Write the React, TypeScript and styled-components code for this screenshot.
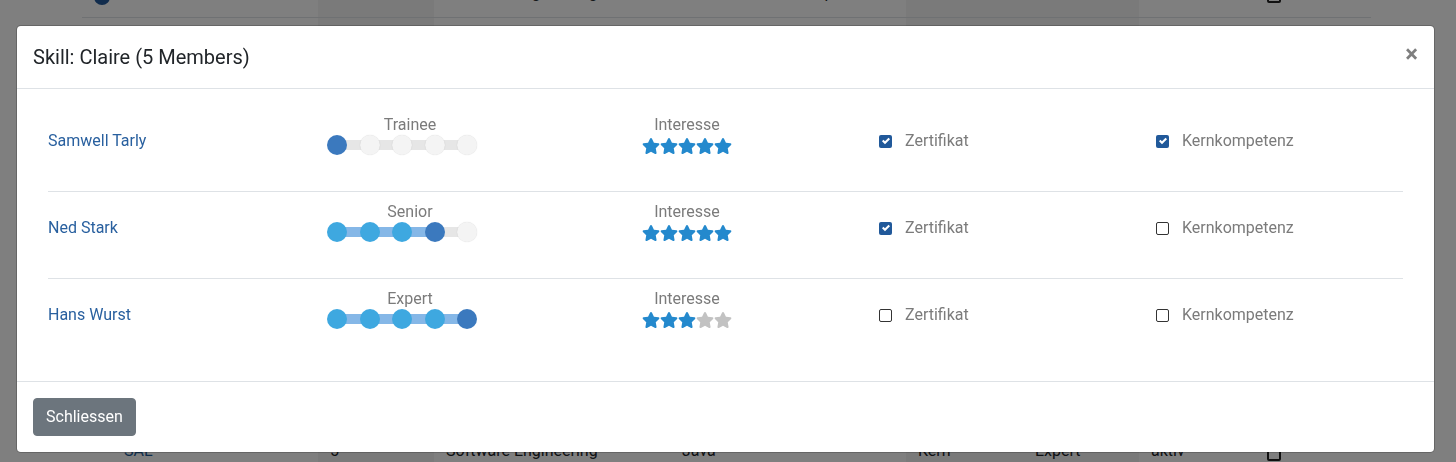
import React from "react";
import styled, { createGlobalStyle } from "styled-components";

const GlobalStyle = createGlobalStyle`
  * { box-sizing: border-box; }
  html, body { margin: 0; padding: 0; height: 100%; overflow: hidden; background: #fff; }
  body {
    font-family: Roboto, "Noto Sans", "Liberation Sans", Arial, sans-serif;
    font-size: 16px;
    line-height: 1.5;
    color: #212529;
  }
`;

/* ---------- background page (table behind the modal) ---------- */

const Page = styled.div`
  padding-left: 82px;
`;

const Table = styled.div`
  width: 1289px;
`;

const TRow = styled.div<{ $partial?: boolean }>`
  display: grid;
  grid-template-columns: 236px 116px 236px 236px 117px 116px 116px 116px;
  grid-template-rows: minmax(0, 1fr);
  height: ${(p) => (p.$partial ? "18px" : "51px")};
  border-bottom: 1px solid #dee2e6;
  & > *:nth-child(2),
  & > *:nth-child(5),
  & > *:nth-child(6) {
    background: #f4f4f4;
  }
`;

const LastRow = styled(TRow)`
  height: 60px;
  border-bottom: none;
`;

const TCell = styled.div<{ $partial?: boolean }>`
  min-height: 0;
  display: flex;
  flex-direction: column;
  justify-content: ${(p) => (p.$partial ? "flex-end" : "flex-start")};
  padding: ${(p) => (p.$partial ? "0 12px 12px" : "13px 12px 0")};
  white-space: nowrap;
`;

const CellLine = styled.div`
  flex: 0 0 24px;
  display: flex;
  align-items: center;
  gap: 14px;
  height: 24px;
  line-height: 24px;
`;

const Avatar = styled.span<{ $hidden?: boolean }>`
  flex: 0 0 16px;
  height: 16px;
  margin-top: 8px;
  border-radius: 50%;
  background: ${(p) => (p.$hidden ? "transparent" : "#23599a")};
`;

const TLink = styled.span`
  color: #1f5c99;
`;

const EditBox = styled.span`
  width: 14px;
  height: 14px;
  margin-top: 6px;
  border: 2px solid #222;
  border-radius: 2px;
`;

/* ---------- modal ---------- */

const Backdrop = styled.div`
  position: fixed;
  inset: 0;
  background: rgba(0, 0, 0, 0.5);
  padding: 25px 21px 0 16px;
`;

const Dialog = styled.div`
  width: 1419px;
  background: #fff;
  background-clip: padding-box;
  border: 1px solid rgba(0, 0, 0, 0.2);
  border-radius: 4.8px;
  display: flex;
  flex-direction: column;
`;

const Header = styled.div`
  display: flex;
  align-items: flex-start;
  padding: 16px;
  border-bottom: 1px solid #dee2e6;
`;

const Title = styled.h5`
  margin: 0;
  font-size: 20px;
  font-weight: 400;
  line-height: 30px;
  color: #212529;
`;

const Close = styled.button`
  margin: -16px -16px -16px auto;
  padding: 16px;
  background: transparent;
  border: 0;
  font-family: Roboto, "Liberation Sans", Arial, sans-serif;
  font-size: 24px;
  font-weight: 700;
  line-height: 1;
  color: #000;
  opacity: 0.5;
  text-shadow: 0 1px 0 #fff;
  cursor: pointer;
`;

const Body = styled.div`
  padding: 16px 31px;
`;

const MemberRow = styled.div<{ $last?: boolean }>`
  display: grid;
  grid-template-columns: repeat(5, 1fr);
  column-gap: 30px;
  align-items: start;
  height: ${(p) => (p.$last ? "86px" : "87px")};
  padding-top: 8px;
  border-bottom: ${(p) => (p.$last ? "none" : "1px solid #dee2e6")};
`;

const NameCell = styled.div`
  padding-top: 16px;
  line-height: 24px;
  color: #29609f;
`;

const Block = styled.div`
  width: 170px;
  display: flex;
  flex-direction: column;
`;

const BlockLabel = styled.div`
  text-align: center;
  line-height: 24px;
  color: #7b7b7b;
`;

const Slider = styled.div`
  display: flex;
  align-items: center;
  width: 150px;
  height: 20px;
  margin: -2px 0 0 2px;
`;

type KnobState = "done" | "active" | "empty";

const Knob = styled.span<{ $state: KnobState }>`
  position: relative;
  z-index: 1;
  flex: 0 0 20px;
  height: 20px;
  border-radius: 50%;
  background: ${(p) =>
    p.$state === "active" ? "#3b79be" : p.$state === "done" ? "#3ea8e0" : "#f4f4f4"};
  box-shadow: ${(p) => (p.$state === "empty" ? "0 0 1px 0 rgba(0,0,0,0.18)" : "none")};
`;

const Segment = styled.span<{ $filled: boolean }>`
  flex: 0 0 32.5px;
  height: 10px;
  margin: 0 -10px;
  background: ${(p) => (p.$filled ? "#85b7e7" : "#e6e6e6")};
`;

const Stars = styled.div`
  display: flex;
  justify-content: center;
  margin-top: 1px;
`;

const StarSvg = styled.svg<{ $on: boolean }>`
  display: block;
  width: 18px;
  height: 16px;
  fill: ${(p) => (p.$on ? "#2489cd" : "#c2c2c2")};
`;

const CheckCell = styled.label`
  padding-top: 16px;
  display: flex;
  align-items: center;
  height: 40px;
  line-height: 24px;
  color: #7b7b7b;
`;

const Box = styled.span<{ $checked: boolean }>`
  flex: 0 0 13px;
  width: 13px;
  height: 13px;
  margin-right: 13px;
  border-radius: 2px;
  display: flex;
  align-items: center;
  justify-content: center;
  background: ${(p) => (p.$checked ? "#21599a" : "#fff")};
  border: ${(p) => (p.$checked ? "none" : "1.5px solid #333")};
`;

const Footer = styled.div`
  display: flex;
  justify-content: flex-start;
  padding: 16px;
  border-top: 1px solid #dee2e6;
`;

const Button = styled.button`
  font-family: Roboto, "Liberation Sans", Arial, sans-serif;
  font-size: 16px;
  line-height: 24px;
  padding: 6px 12px;
  color: #fff;
  background: #6c757d;
  border: 1px solid #6c757d;
  border-radius: 4px;
  cursor: pointer;
`;

/* ---------- data ---------- */

const LEVELS = ["Trainee", "Junior", "Advanced", "Senior", "Expert"];

type Member = { name: string; level: number; interest: number; cert: boolean; core: boolean };

const members: Member[] = [
  { name: "Samwell Tarly", level: 1, interest: 5, cert: true, core: true },
  { name: "Ned Stark", level: 4, interest: 5, cert: true, core: false },
  { name: "Hans Wurst", level: 5, interest: 3, cert: false, core: false },
];

const STAR =
  "M259.3 17.8L194 150.2 47.9 171.5c-26.2 3.8-36.7 36.1-17.7 54.6l105.7 103-25 145.5c-4.5 26.3 23.2 46 46.4 33.7L288 439.6l130.7 68.7c23.2 12.2 50.9-7.4 46.4-33.7l-25-145.5 105.7-103c19-18.5 8.5-50.8-17.7-54.6L382 150.2 316.7 17.8c-11.7-23.6-45.6-23.9-57.4 0z";

const Star = ({ on }: { on: boolean }) => (
  <StarSvg viewBox="0 0 576 512" $on={on}>
    <path d={STAR} />
  </StarSvg>
);

const Check = ({ checked, label }: { checked: boolean; label: string }) => (
  <CheckCell>
    <Box $checked={checked}>
      {checked && (
        <svg width="8" height="8" viewBox="0 0 8 8">
          <path fill="#fff" d="M6.564.75l-3.59 3.612-1.538-1.55L0 4.26l2.974 2.99L8 2.193z" />
        </svg>
      )}
    </Box>
    {label}
  </CheckCell>
);

const LevelSlider = ({ level }: { level: number }) => {
  const parts: React.ReactNode[] = [];
  for (let i = 1; i <= 5; i++) {
    const state: KnobState = i === level ? "active" : i < level ? "done" : "empty";
    parts.push(<Knob key={`k${i}`} $state={state} />);
    if (i < 5) parts.push(<Segment key={`s${i}`} $filled={i < level} />);
  }
  return <Slider>{parts}</Slider>;
};

const fillerRows = [
  ["Arya Stark", "3", "Frontend", "React", "Kern", "Senior", "aktiv"],
  ["Jon Snow", "4", "Backend", "Kotlin", "Basis", "Expert", "aktiv"],
  ["Sansa Stark", "2", "Testing", "Cypress", "Kern", "Junior", "aktiv"],
  ["Bran Stark", "1", "DevOps", "Docker", "Basis", "Trainee", "aktiv"],
  ["Tyrion Lannister", "5", "Architektur", "UML", "Kern", "Expert", "aktiv"],
  ["Brienne Tarth", "3", "Security", "OWASP", "Basis", "Senior", "aktiv"],
  ["Davos Seaworth", "2", "Datenbanken", "SQL", "Kern", "Advanced", "aktiv"],
  ["Jorah Mormont", "4", "Cloud", "AWS", "Basis", "Senior", "aktiv"],
];

export default function App() {
  return (
    <>
      <GlobalStyle />
      <Page>
        <Table>
          <TRow $partial>
            <TCell $partial>
              <CellLine>
                <Avatar />
                <TLink>NED</TLink>
              </CellLine>
            </TCell>
            <TCell $partial>
              <CellLine>4</CellLine>
            </TCell>
            <TCell $partial>
              <CellLine>Software Engineering</CellLine>
            </TCell>
            <TCell $partial>
              <CellLine>Cloud Native Development</CellLine>
            </TCell>
            <TCell $partial>
              <CellLine>Kern</CellLine>
            </TCell>
            <TCell $partial>
              <CellLine>Senior</CellLine>
            </TCell>
            <TCell $partial>
              <CellLine>aktiv</CellLine>
            </TCell>
            <TCell $partial>
              <CellLine>
                <EditBox />
              </CellLine>
            </TCell>
          </TRow>
          {fillerRows.map((r) => (
            <TRow key={r[0]}>
              <TCell>
                <CellLine>
                  <Avatar />
                  <TLink>{r[0]}</TLink>
                </CellLine>
              </TCell>
              {r.slice(1).map((c, i) => (
                <TCell key={i}>
                  <CellLine>{c}</CellLine>
                </TCell>
              ))}
              <TCell>
                <CellLine>
                  <EditBox />
                </CellLine>
              </TCell>
            </TRow>
          ))}
          <LastRow>
            <TCell>
              <CellLine>
                <Avatar $hidden />
                <TLink>SAL</TLink>
              </CellLine>
            </TCell>
            <TCell>
              <CellLine>5</CellLine>
            </TCell>
            <TCell>
              <CellLine>Software Engineering</CellLine>
            </TCell>
            <TCell>
              <CellLine>Java</CellLine>
            </TCell>
            <TCell>
              <CellLine>Kern</CellLine>
            </TCell>
            <TCell>
              <CellLine>Expert</CellLine>
            </TCell>
            <TCell>
              <CellLine>aktiv</CellLine>
            </TCell>
            <TCell>
              <CellLine>
                <EditBox />
              </CellLine>
            </TCell>
          </LastRow>
        </Table>
      </Page>

      <Backdrop>
        <Dialog role="dialog">
          <Header>
            <Title>Skill: Claire (5 Members)</Title>
            <Close aria-label="Close">×</Close>
          </Header>
          <Body>
            {members.map((m, idx) => (
              <MemberRow key={m.name} $last={idx === members.length - 1}>
                <NameCell>{m.name}</NameCell>
                <Block>
                  <BlockLabel>{LEVELS[m.level - 1]}</BlockLabel>
                  <LevelSlider level={m.level} />
                </Block>
                <Block>
                  <BlockLabel>Interesse</BlockLabel>
                  <Stars>
                    {[1, 2, 3, 4, 5].map((s) => (
                      <Star key={s} on={s <= m.interest} />
                    ))}
                  </Stars>
                </Block>
                <Check checked={m.cert} label="Zertifikat" />
                <Check checked={m.core} label="Kernkompetenz" />
              </MemberRow>
            ))}
          </Body>
          <Footer>
            <Button>Schliessen</Button>
          </Footer>
        </Dialog>
      </Backdrop>
    </>
  );
}
